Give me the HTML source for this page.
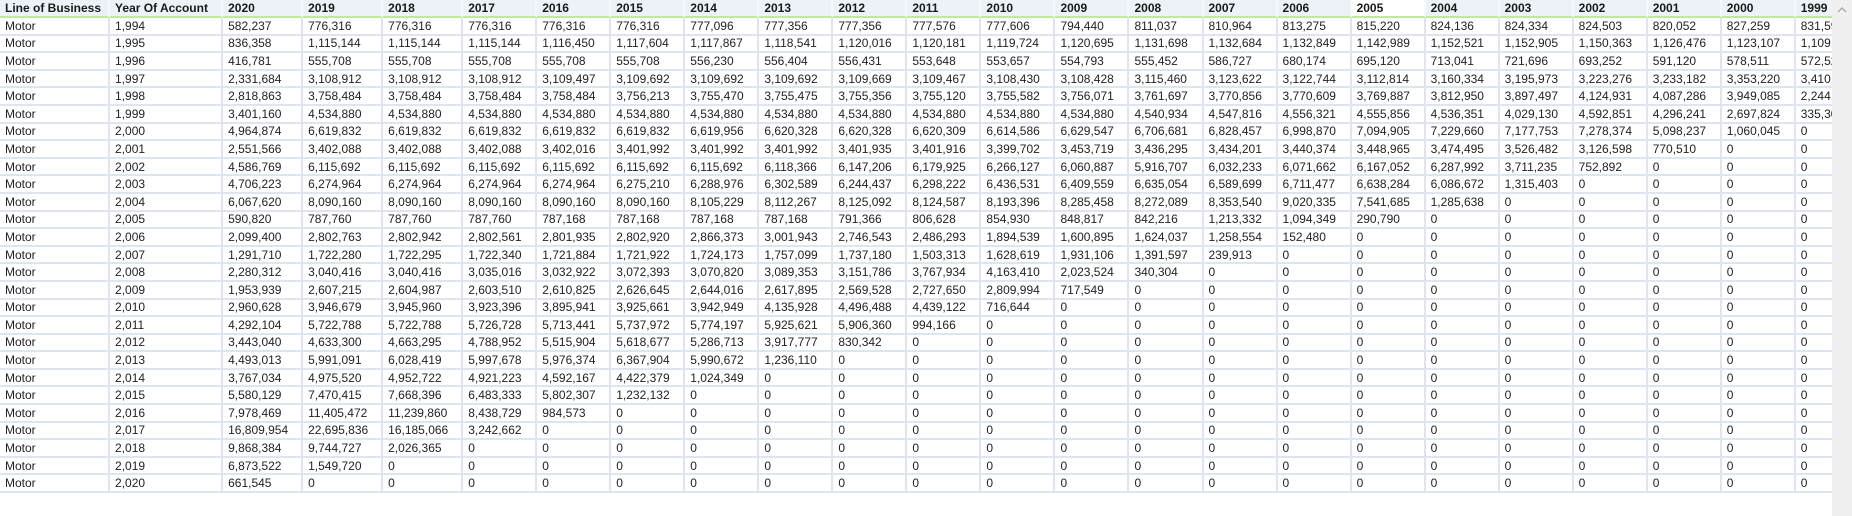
<!DOCTYPE html>
<html><head><meta charset="utf-8"><style>
html,body{margin:0;padding:0;background:#fff;width:1852px;height:516px;overflow:hidden}
#wrap{position:absolute;left:0;top:0;width:1832px;height:516px;overflow:hidden}
table{border-collapse:separate;border-spacing:0;table-layout:fixed;width:1870px;font-family:"Liberation Sans",sans-serif;font-size:12px;color:#222}
td,th{padding:0 0 0 5px;white-space:nowrap;overflow:hidden;text-align:left;border-right:2px solid #dfe5ef;border-bottom:2px solid #dfe5ef;box-sizing:border-box;line-height:14px}
th{background:#edf1f8;font-weight:bold;border-right:2px solid #f6f8fc;border-bottom:2px solid #bfe9a0;height:18px;color:#1a1a1a}
th.w{background:#fff}
tr.r td{height:17.6px}
#sb{position:absolute;left:1832px;top:0;width:20px;height:516px;background:#f0f0f0}
</style></head><body>
<div id="wrap"><table>
<colgroup><col style="width:110px"><col style="width:113px"><col style="width:80px"><col style="width:80px"><col style="width:80px"><col style="width:74px"><col style="width:74px"><col style="width:74px"><col style="width:74px"><col style="width:74px"><col style="width:74px"><col style="width:74px"><col style="width:74px"><col style="width:74px"><col style="width:74px"><col style="width:74px"><col style="width:74px"><col style="width:74px"><col style="width:74px"><col style="width:74px"><col style="width:74px"><col style="width:74px"><col style="width:74px"><col style="width:74px"></colgroup>
<tr><th>Line of Business</th><th>Year Of Account</th><th>2020</th><th>2019</th><th>2018</th><th>2017</th><th>2016</th><th>2015</th><th>2014</th><th>2013</th><th>2012</th><th>2011</th><th>2010</th><th>2009</th><th>2008</th><th>2007</th><th>2006</th><th class="w">2005</th><th>2004</th><th>2003</th><th>2002</th><th>2001</th><th>2000</th><th>1999</th></tr>
<tr class="r"><td>Motor</td><td>1,994</td><td>582,237</td><td>776,316</td><td>776,316</td><td>776,316</td><td>776,316</td><td>776,316</td><td>777,096</td><td>777,356</td><td>777,356</td><td>777,576</td><td>777,606</td><td>794,440</td><td>811,037</td><td>810,964</td><td>813,275</td><td>815,220</td><td>824,136</td><td>824,334</td><td>824,503</td><td>820,052</td><td>827,259</td><td>831,594</td></tr>
<tr class="r"><td>Motor</td><td>1,995</td><td>836,358</td><td>1,115,144</td><td>1,115,144</td><td>1,115,144</td><td>1,116,450</td><td>1,117,604</td><td>1,117,867</td><td>1,118,541</td><td>1,120,016</td><td>1,120,181</td><td>1,119,724</td><td>1,120,695</td><td>1,131,698</td><td>1,132,684</td><td>1,132,849</td><td>1,142,989</td><td>1,152,521</td><td>1,152,905</td><td>1,150,363</td><td>1,126,476</td><td>1,123,107</td><td>1,109,600</td></tr>
<tr class="r"><td>Motor</td><td>1,996</td><td>416,781</td><td>555,708</td><td>555,708</td><td>555,708</td><td>555,708</td><td>555,708</td><td>556,230</td><td>556,404</td><td>556,431</td><td>553,648</td><td>553,657</td><td>554,793</td><td>555,452</td><td>586,727</td><td>680,174</td><td>695,120</td><td>713,041</td><td>721,696</td><td>693,252</td><td>591,120</td><td>578,511</td><td>572,520</td></tr>
<tr class="r"><td>Motor</td><td>1,997</td><td>2,331,684</td><td>3,108,912</td><td>3,108,912</td><td>3,108,912</td><td>3,109,497</td><td>3,109,692</td><td>3,109,692</td><td>3,109,692</td><td>3,109,669</td><td>3,109,467</td><td>3,108,430</td><td>3,108,428</td><td>3,115,460</td><td>3,123,622</td><td>3,122,744</td><td>3,112,814</td><td>3,160,334</td><td>3,195,973</td><td>3,223,276</td><td>3,233,182</td><td>3,353,220</td><td>3,410,600</td></tr>
<tr class="r"><td>Motor</td><td>1,998</td><td>2,818,863</td><td>3,758,484</td><td>3,758,484</td><td>3,758,484</td><td>3,758,484</td><td>3,756,213</td><td>3,755,470</td><td>3,755,475</td><td>3,755,356</td><td>3,755,120</td><td>3,755,582</td><td>3,756,071</td><td>3,761,697</td><td>3,770,856</td><td>3,770,609</td><td>3,769,887</td><td>3,812,950</td><td>3,897,497</td><td>4,124,931</td><td>4,087,286</td><td>3,949,085</td><td>2,244,700</td></tr>
<tr class="r"><td>Motor</td><td>1,999</td><td>3,401,160</td><td>4,534,880</td><td>4,534,880</td><td>4,534,880</td><td>4,534,880</td><td>4,534,880</td><td>4,534,880</td><td>4,534,880</td><td>4,534,880</td><td>4,534,880</td><td>4,534,880</td><td>4,534,880</td><td>4,540,934</td><td>4,547,816</td><td>4,556,321</td><td>4,555,856</td><td>4,536,351</td><td>4,029,130</td><td>4,592,851</td><td>4,296,241</td><td>2,697,824</td><td>335,300</td></tr>
<tr class="r"><td>Motor</td><td>2,000</td><td>4,964,874</td><td>6,619,832</td><td>6,619,832</td><td>6,619,832</td><td>6,619,832</td><td>6,619,832</td><td>6,619,956</td><td>6,620,328</td><td>6,620,328</td><td>6,620,309</td><td>6,614,586</td><td>6,629,547</td><td>6,706,681</td><td>6,828,457</td><td>6,998,870</td><td>7,094,905</td><td>7,229,660</td><td>7,177,753</td><td>7,278,374</td><td>5,098,237</td><td>1,060,045</td><td>0</td></tr>
<tr class="r"><td>Motor</td><td>2,001</td><td>2,551,566</td><td>3,402,088</td><td>3,402,088</td><td>3,402,088</td><td>3,402,016</td><td>3,401,992</td><td>3,401,992</td><td>3,401,992</td><td>3,401,935</td><td>3,401,916</td><td>3,399,702</td><td>3,453,719</td><td>3,436,295</td><td>3,434,201</td><td>3,440,374</td><td>3,448,965</td><td>3,474,495</td><td>3,526,482</td><td>3,126,598</td><td>770,510</td><td>0</td><td>0</td></tr>
<tr class="r"><td>Motor</td><td>2,002</td><td>4,586,769</td><td>6,115,692</td><td>6,115,692</td><td>6,115,692</td><td>6,115,692</td><td>6,115,692</td><td>6,115,692</td><td>6,118,366</td><td>6,147,206</td><td>6,179,925</td><td>6,266,127</td><td>6,060,887</td><td>5,916,707</td><td>6,032,233</td><td>6,071,662</td><td>6,167,052</td><td>6,287,992</td><td>3,711,235</td><td>752,892</td><td>0</td><td>0</td><td>0</td></tr>
<tr class="r"><td>Motor</td><td>2,003</td><td>4,706,223</td><td>6,274,964</td><td>6,274,964</td><td>6,274,964</td><td>6,274,964</td><td>6,275,210</td><td>6,288,976</td><td>6,302,589</td><td>6,244,437</td><td>6,298,222</td><td>6,436,531</td><td>6,409,559</td><td>6,635,054</td><td>6,589,699</td><td>6,711,477</td><td>6,638,284</td><td>6,086,672</td><td>1,315,403</td><td>0</td><td>0</td><td>0</td><td>0</td></tr>
<tr class="r"><td>Motor</td><td>2,004</td><td>6,067,620</td><td>8,090,160</td><td>8,090,160</td><td>8,090,160</td><td>8,090,160</td><td>8,090,160</td><td>8,105,229</td><td>8,112,267</td><td>8,125,092</td><td>8,124,587</td><td>8,193,396</td><td>8,285,458</td><td>8,272,089</td><td>8,353,540</td><td>9,020,335</td><td>7,541,685</td><td>1,285,638</td><td>0</td><td>0</td><td>0</td><td>0</td><td>0</td></tr>
<tr class="r"><td>Motor</td><td>2,005</td><td>590,820</td><td>787,760</td><td>787,760</td><td>787,760</td><td>787,168</td><td>787,168</td><td>787,168</td><td>787,168</td><td>791,366</td><td>806,628</td><td>854,930</td><td>848,817</td><td>842,216</td><td>1,213,332</td><td>1,094,349</td><td>290,790</td><td>0</td><td>0</td><td>0</td><td>0</td><td>0</td><td>0</td></tr>
<tr class="r"><td>Motor</td><td>2,006</td><td>2,099,400</td><td>2,802,763</td><td>2,802,942</td><td>2,802,561</td><td>2,801,935</td><td>2,802,920</td><td>2,866,373</td><td>3,001,943</td><td>2,746,543</td><td>2,486,293</td><td>1,894,539</td><td>1,600,895</td><td>1,624,037</td><td>1,258,554</td><td>152,480</td><td>0</td><td>0</td><td>0</td><td>0</td><td>0</td><td>0</td><td>0</td></tr>
<tr class="r"><td>Motor</td><td>2,007</td><td>1,291,710</td><td>1,722,280</td><td>1,722,295</td><td>1,722,340</td><td>1,721,884</td><td>1,721,922</td><td>1,724,173</td><td>1,757,099</td><td>1,737,180</td><td>1,503,313</td><td>1,628,619</td><td>1,931,106</td><td>1,391,597</td><td>239,913</td><td>0</td><td>0</td><td>0</td><td>0</td><td>0</td><td>0</td><td>0</td><td>0</td></tr>
<tr class="r"><td>Motor</td><td>2,008</td><td>2,280,312</td><td>3,040,416</td><td>3,040,416</td><td>3,035,016</td><td>3,032,922</td><td>3,072,393</td><td>3,070,820</td><td>3,089,353</td><td>3,151,786</td><td>3,767,934</td><td>4,163,410</td><td>2,023,524</td><td>340,304</td><td>0</td><td>0</td><td>0</td><td>0</td><td>0</td><td>0</td><td>0</td><td>0</td><td>0</td></tr>
<tr class="r"><td>Motor</td><td>2,009</td><td>1,953,939</td><td>2,607,215</td><td>2,604,987</td><td>2,603,510</td><td>2,610,825</td><td>2,626,645</td><td>2,644,016</td><td>2,617,895</td><td>2,569,528</td><td>2,727,650</td><td>2,809,994</td><td>717,549</td><td>0</td><td>0</td><td>0</td><td>0</td><td>0</td><td>0</td><td>0</td><td>0</td><td>0</td><td>0</td></tr>
<tr class="r"><td>Motor</td><td>2,010</td><td>2,960,628</td><td>3,946,679</td><td>3,945,960</td><td>3,923,396</td><td>3,895,941</td><td>3,925,661</td><td>3,942,949</td><td>4,135,928</td><td>4,496,488</td><td>4,439,122</td><td>716,644</td><td>0</td><td>0</td><td>0</td><td>0</td><td>0</td><td>0</td><td>0</td><td>0</td><td>0</td><td>0</td><td>0</td></tr>
<tr class="r"><td>Motor</td><td>2,011</td><td>4,292,104</td><td>5,722,788</td><td>5,722,788</td><td>5,726,728</td><td>5,713,441</td><td>5,737,972</td><td>5,774,197</td><td>5,925,621</td><td>5,906,360</td><td>994,166</td><td>0</td><td>0</td><td>0</td><td>0</td><td>0</td><td>0</td><td>0</td><td>0</td><td>0</td><td>0</td><td>0</td><td>0</td></tr>
<tr class="r"><td>Motor</td><td>2,012</td><td>3,443,040</td><td>4,633,300</td><td>4,663,295</td><td>4,788,952</td><td>5,515,904</td><td>5,618,677</td><td>5,286,713</td><td>3,917,777</td><td>830,342</td><td>0</td><td>0</td><td>0</td><td>0</td><td>0</td><td>0</td><td>0</td><td>0</td><td>0</td><td>0</td><td>0</td><td>0</td><td>0</td></tr>
<tr class="r"><td>Motor</td><td>2,013</td><td>4,493,013</td><td>5,991,091</td><td>6,028,419</td><td>5,997,678</td><td>5,976,374</td><td>6,367,904</td><td>5,990,672</td><td>1,236,110</td><td>0</td><td>0</td><td>0</td><td>0</td><td>0</td><td>0</td><td>0</td><td>0</td><td>0</td><td>0</td><td>0</td><td>0</td><td>0</td><td>0</td></tr>
<tr class="r"><td>Motor</td><td>2,014</td><td>3,767,034</td><td>4,975,520</td><td>4,952,722</td><td>4,921,223</td><td>4,592,167</td><td>4,422,379</td><td>1,024,349</td><td>0</td><td>0</td><td>0</td><td>0</td><td>0</td><td>0</td><td>0</td><td>0</td><td>0</td><td>0</td><td>0</td><td>0</td><td>0</td><td>0</td><td>0</td></tr>
<tr class="r"><td>Motor</td><td>2,015</td><td>5,580,129</td><td>7,470,415</td><td>7,668,396</td><td>6,483,333</td><td>5,802,307</td><td>1,232,132</td><td>0</td><td>0</td><td>0</td><td>0</td><td>0</td><td>0</td><td>0</td><td>0</td><td>0</td><td>0</td><td>0</td><td>0</td><td>0</td><td>0</td><td>0</td><td>0</td></tr>
<tr class="r"><td>Motor</td><td>2,016</td><td>7,978,469</td><td>11,405,472</td><td>11,239,860</td><td>8,438,729</td><td>984,573</td><td>0</td><td>0</td><td>0</td><td>0</td><td>0</td><td>0</td><td>0</td><td>0</td><td>0</td><td>0</td><td>0</td><td>0</td><td>0</td><td>0</td><td>0</td><td>0</td><td>0</td></tr>
<tr class="r"><td>Motor</td><td>2,017</td><td>16,809,954</td><td>22,695,836</td><td>16,185,066</td><td>3,242,662</td><td>0</td><td>0</td><td>0</td><td>0</td><td>0</td><td>0</td><td>0</td><td>0</td><td>0</td><td>0</td><td>0</td><td>0</td><td>0</td><td>0</td><td>0</td><td>0</td><td>0</td><td>0</td></tr>
<tr class="r"><td>Motor</td><td>2,018</td><td>9,868,384</td><td>9,744,727</td><td>2,026,365</td><td>0</td><td>0</td><td>0</td><td>0</td><td>0</td><td>0</td><td>0</td><td>0</td><td>0</td><td>0</td><td>0</td><td>0</td><td>0</td><td>0</td><td>0</td><td>0</td><td>0</td><td>0</td><td>0</td></tr>
<tr class="r"><td>Motor</td><td>2,019</td><td>6,873,522</td><td>1,549,720</td><td>0</td><td>0</td><td>0</td><td>0</td><td>0</td><td>0</td><td>0</td><td>0</td><td>0</td><td>0</td><td>0</td><td>0</td><td>0</td><td>0</td><td>0</td><td>0</td><td>0</td><td>0</td><td>0</td><td>0</td></tr>
<tr class="r"><td>Motor</td><td>2,020</td><td>661,545</td><td>0</td><td>0</td><td>0</td><td>0</td><td>0</td><td>0</td><td>0</td><td>0</td><td>0</td><td>0</td><td>0</td><td>0</td><td>0</td><td>0</td><td>0</td><td>0</td><td>0</td><td>0</td><td>0</td><td>0</td><td>0</td></tr>
</table></div>
<div id="sb"><svg width="20" height="20" style="position:absolute;left:0;top:0"><path d="M6 12 L10 8 L14 12" fill="none" stroke="#a6a6a6" stroke-width="1.3"/></svg></div>
</body></html>
